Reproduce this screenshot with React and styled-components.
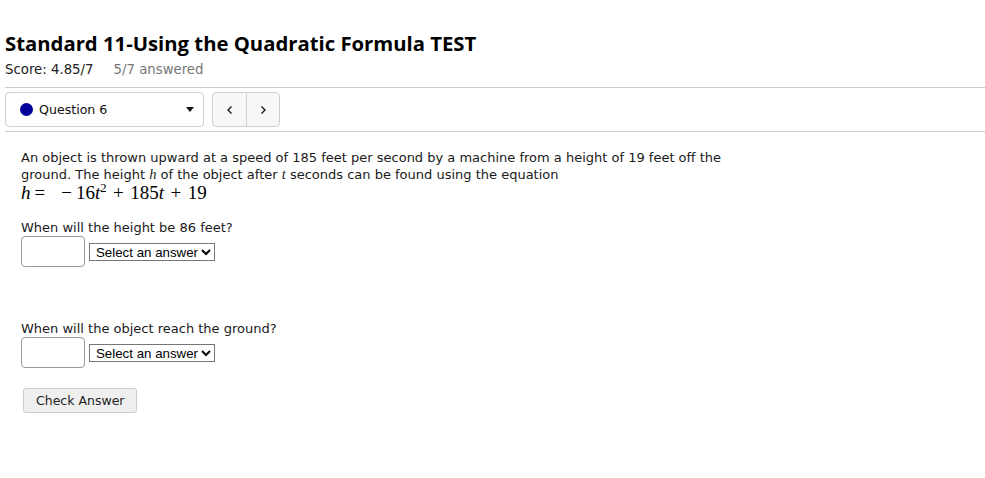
import React from 'react'
import styled, { createGlobalStyle } from 'styled-components'

const Global = createGlobalStyle`
  body {
    margin: 0;
    background: #fff;
    font-family: "DejaVu Sans", "Open Sans", sans-serif;
    color: #1a1a1a;
  }
`

const Page = styled.div`
  padding: 29px 0 0 5px;
`

const Title = styled.h1`
  margin: 0;
  font-family: "Open Sans", "DejaVu Sans", sans-serif;
  font-size: 20.3px;
  font-weight: 700;
  color: #000;
  line-height: 28px;
`

const ScoreRow = styled.div`
  display: flex;
  gap: 20px;
  font-size: 13.3px;
  margin-top: 3px;
  line-height: 19px;
`

const Score = styled.span`
  color: #222;
`

const Answered = styled.span`
  color: #777;
`

const Rule = styled.hr`
  border: 0;
  border-top: 1px solid #ccc;
  margin: ${p => p.$m || '0'};
`

const NavBar = styled.div`
  display: flex;
  align-items: center;
  gap: 8px;
  padding: 4px 0 4px;
`

const QSelect = styled.div`
  width: 199px;
  height: 35px;
  box-sizing: border-box;
  border: 1px solid #d0d0d0;
  border-radius: 4px;
  display: flex;
  align-items: center;
  padding: 0 9px 0 14px;
  font-size: 12.6px;
  color: #111;
`

const Dot = styled.span`
  width: 13px;
  height: 13px;
  border-radius: 50%;
  background: #000099;
  margin-right: 6px;
`

const QLabel = styled.span`
  flex: 1;
`

const Caret = styled.span`
  width: 0;
  height: 0;
  border-left: 4px solid transparent;
  border-right: 4px solid transparent;
  border-top: 5px solid #111;
`

const Arrows = styled.div`
  display: flex;
  height: 35px;
  box-sizing: border-box;
  border: 1px solid #d0d0d0;
  border-radius: 4px;
  background: #f7f7f7;
  overflow: hidden;
`

const ArrowBtn = styled.button`
  width: 33px;
  border: 0;
  border-left: ${p => (p.$first ? '0' : '1px solid #d0d0d0')};
  background: transparent;
  display: flex;
  align-items: center;
  justify-content: center;
  padding: 0;
`

const Body = styled.div`
  padding: 17px 0 0 16px;
  font-size: 13px;
  line-height: 17px;
  color: #1a1a1a;
`

const Para = styled.p`
  margin: 0;
  width: 760px;
`

const MathI = styled.span`
  font-family: "Liberation Serif", "DejaVu Serif", serif;
  font-style: italic;
  font-size: 14.5px;
  line-height: 1;
`

const MathLine = styled.div`
  font-family: "Liberation Serif", "DejaVu Serif", serif;
  font-size: 19px;
  line-height: 22px;
  margin-top: -1px;
  color: #000;
  white-space: nowrap;
`

const V = styled.i`
  font-style: italic;
`

const Op = styled.span`
  margin: 0 ${p => p.$r ?? 6.5}px 0 ${p => p.$l ?? 6.5}px;
`

const Sup = styled.sup`
  font-size: 12.5px;
  line-height: 0;
  vertical-align: 7px;
`

const Part = styled.div`
  margin-top: ${p => p.$top};
`

const AnswerRow = styled.div`
  display: flex;
  align-items: center;
  gap: 4px;
`

const Box = styled.input`
  width: 64px;
  height: 31px;
  box-sizing: border-box;
  border: 1px solid #999;
  border-radius: 4px;
`

const Sel = styled.select`
  height: 18px;
  font-family: "Liberation Sans", Arial, sans-serif;
  font-size: 13.3px;
  border: 1px solid #767676;
  border-radius: 0;
  padding: 0 0 0 2px;
  background: #fff;
  color: #000;
`

const CheckBtn = styled.button`
  margin: 20px 0 0 2px;
  height: 25px;
  padding: 0 12px;
  font-family: "DejaVu Sans", "Open Sans", sans-serif;
  font-size: 12.5px;
  color: #222;
  background: #efefef;
  border: 1px solid #ccc;
  border-radius: 3px;
`

const Chevron = ({ dir }) => (
  <svg width="10" height="10" viewBox="0 0 10 10">
    <path
      d={dir === 'left' ? 'M6.5 1.5 L3 5 L6.5 8.5' : 'M3.5 1.5 L7 5 L3.5 8.5'}
      fill="none"
      stroke="#111"
      strokeWidth="1.3"
    />
  </svg>
)

const Answer = () => (
  <AnswerRow>
    <Box />
    <Sel defaultValue="">
      <option value="">Select an answer</option>
      <option>seconds</option>
      <option>feet</option>
    </Sel>
  </AnswerRow>
)

export default function App() {
  return (
    <>
      <Global />
      <Page>
        <Title>Standard 11-Using the Quadratic Formula TEST</Title>
        <ScoreRow>
          <Score>Score: 4.85/7</Score>
          <Answered>5/7 answered</Answered>
        </ScoreRow>
        <Rule $m="8px 0 0 0" />
        <NavBar>
          <QSelect>
            <Dot />
            <QLabel>Question 6</QLabel>
            <Caret />
          </QSelect>
          <Arrows>
            <ArrowBtn $first>
              <Chevron dir="left" />
            </ArrowBtn>
            <ArrowBtn>
              <Chevron dir="right" />
            </ArrowBtn>
          </Arrows>
        </NavBar>
        <Rule />
        <Body>
          <Para>
            An object is thrown upward at a speed of 185 feet per second by a machine from a height of 19 feet off the
            <br />
            ground. The height <MathI>h</MathI> of the object after <MathI>t</MathI> seconds can be found using the
            equation
          </Para>
          <MathLine>
            <V>h</V>
            <Op $l={4} $r={16}>=</Op>
            <Op $l={0} $r={4}>&minus;</Op>
            16<V>t</V>
            <Sup>2</Sup>
            <Op>+</Op>
            185<V>t</V>
            <Op>+</Op>
            19
          </MathLine>
          <Part $top="15px">
            When will the height be 86 feet?
            <Answer />
          </Part>
          <Part $top="53px">
            When will the object reach the ground?
            <Answer />
          </Part>
          <CheckBtn>Check Answer</CheckBtn>
        </Body>
      </Page>
    </>
  )
}
